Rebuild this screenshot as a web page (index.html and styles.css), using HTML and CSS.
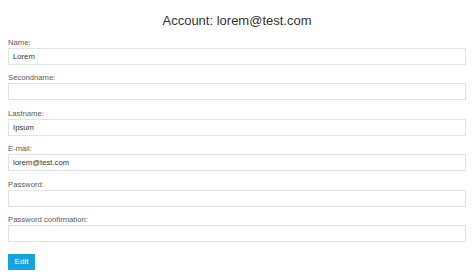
FILE: index.html
```html
<!DOCTYPE html>
<html>
<head>
<meta charset="utf-8">
<link rel="stylesheet" href="styles.css">
</head>
<body>
<div class="page">
  <h1 class="title">Account: lorem@test.com</h1>
  <form class="form">
    <div class="field">
      <label class="label">Name:</label>
      <input class="input" type="text" value="Lorem">
    </div>
    <div class="field">
      <label class="label">Secondname:</label>
      <input class="input" type="text" value="">
    </div>
    <div class="field">
      <label class="label">Lastname:</label>
      <input class="input" type="text" value="Ipsum">
    </div>
    <div class="field">
      <label class="label">E-mail:</label>
      <input class="input" type="text" value="lorem@test.com">
    </div>
    <div class="field">
      <label class="label">Password:</label>
      <input class="input" type="password" value="">
    </div>
    <div class="field">
      <label class="label">Password confirmation:</label>
      <input class="input" type="password" value="">
    </div>
    <button class="btn" type="button">Edit</button>
  </form>
</div>
</body>
</html>
```
FILE: styles.css
```css
html, body {
  margin: 0;
  padding: 0;
  background: #ffffff;
}
.page {
  padding: 8px;
  font-family: "Liberation Sans", Arial, sans-serif;
}
.title {
  margin: 5px 0 9px;
  font-size: 13px;
  line-height: 16px;
  font-weight: normal;
  text-align: center;
  color: #333333;
}
.form {
  display: flex;
  flex-direction: column;
}
.field {
  display: flex;
  flex-direction: column;
  margin-bottom: 8.4px;
}
.label {
  font-size: 7.7px;
  line-height: 10px;
  color: #5a5a5a;
}
.input {
  box-sizing: border-box;
  height: 17px;
  width: 100%;
  margin: 0;
  padding: 0 4px;
  border: 1px solid #e2e2e2;
  border-radius: 0;
  font-family: "Liberation Sans", Arial, sans-serif;
  font-size: 7.7px;
  color: #333333;
  background: #ffffff;
  outline: none;
}
.btn {
  align-self: flex-start;
  margin-top: 3.6px;
  width: 27px;
  height: 16px;
  padding: 0;
  border: none;
  border-radius: 0;
  background: #15a3e0;
  color: #ffffff;
  font-family: "Liberation Sans", Arial, sans-serif;
  font-size: 8px;
}
```
